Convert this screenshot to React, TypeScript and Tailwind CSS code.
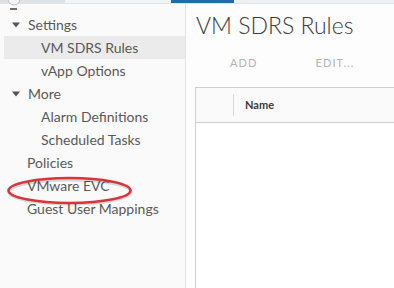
import React from "react";

const font = { fontFamily: "Lato, 'Noto Sans', sans-serif" };

function Caret() {
  return (
    <svg width="8" height="6" viewBox="0 0 8 6" className="shrink-0">
      <path d="M0 0.5 L8 0.5 L4 5.5 Z" fill="#555" />
    </svg>
  );
}

type Item = { label: string; level: 0 | 1 | 2; group?: boolean; active?: boolean };

const items: Item[] = [
  { label: "Settings", level: 0, group: true },
  { label: "VM SDRS Rules", level: 2, active: true },
  { label: "vApp Options", level: 2 },
  { label: "More", level: 0, group: true },
  { label: "Alarm Definitions", level: 2 },
  { label: "Scheduled Tasks", level: 2 },
  { label: "Policies", level: 1 },
  { label: "VMware EVC", level: 1 },
  { label: "Guest User Mappings", level: 1 },
];

function Sidebar() {
  return (
    <aside className="relative w-[186px] shrink-0 border-r border-[#e4e4e4] bg-[#fafafa] pt-[9px]">
      <ul>
        {items.map((it) => (
          <li
            key={it.label}
            className={
              "ml-1 flex h-[23px] items-center text-[14px] text-[#595959] " +
              (it.active ? "bg-[#ebebeb] " : "") +
              (it.level === 0 ? "pl-2 gap-[8px]" : it.level === 1 ? "pl-[23px]" : "pl-[37px]")
            }
          >
            {it.group && <Caret />}
            <span>{it.label}</span>
          </li>
        ))}
      </ul>
      <svg
        className="pointer-events-none absolute left-[6px] top-[171px]"
        width="128"
        height="32"
        viewBox="0 0 128 32"
      >
        <ellipse cx="64" cy="17" rx="61" ry="12" fill="none" stroke="#00000022" strokeWidth="3" />
        <ellipse cx="63.5" cy="15.5" rx="61" ry="12.5" fill="none" stroke="#d8343b" strokeWidth="2.6" />
      </svg>
    </aside>
  );
}

function Main() {
  return (
    <main className="flex min-w-0 flex-1 flex-col bg-[#fdfdfd] pl-[9px]">
      <h1 className="mt-[6px] h-[30px] pl-[1px] text-[23px] font-light leading-[30px] text-[#3b3b3b]">
        VM SDRS Rules
      </h1>
      <div className="mt-[16px] flex h-[14px] items-center text-[11px] tracking-[0.1em] text-[#b3b3b3]">
        <span className="ml-[35px]">ADD</span>
        <span className="ml-[58px]">EDIT...</span>
      </div>
      <div className="mt-[17px] flex-1 border-l border-t border-[#cfcfcf] bg-white">
        <div className="flex h-[35px] items-center border-b border-[#cfcfcf] bg-[#fafafa]">
          <div className="h-[22px] w-[38px] border-r border-[#dadada]" />
          <span className="ml-[11px] text-[11px] font-bold text-[#3a3a3a]">Name</span>
        </div>
      </div>
    </main>
  );
}

export default function App() {
  return (
    <div className="relative flex h-[288px] w-[394px] flex-col overflow-hidden bg-white" style={font}>
      <div className="flex h-[4px] shrink-0 border-b border-[#e3e3e3]">
        <div className="w-[65px] bg-[#dce2e6]" />
        <div className="w-[106px] bg-[#f3f4f5]" />
        <div className="w-[63px] bg-[#1d6ea6]" />
        <div className="flex-1 bg-[#eef0f1]" />
      </div>
      <div className="flex min-h-0 flex-1">
        <Sidebar />
        <Main />
      </div>
      <svg className="absolute left-[6px] top-[-6px]" width="16" height="18" viewBox="0 0 16 18">
        <circle cx="8" cy="5" r="6" fill="#f4f4f4" stroke="#bbb" strokeWidth="1" />
        <path d="M4 15 H11" stroke="#222" strokeWidth="1.3" />
      </svg>
    </div>
  );
}
